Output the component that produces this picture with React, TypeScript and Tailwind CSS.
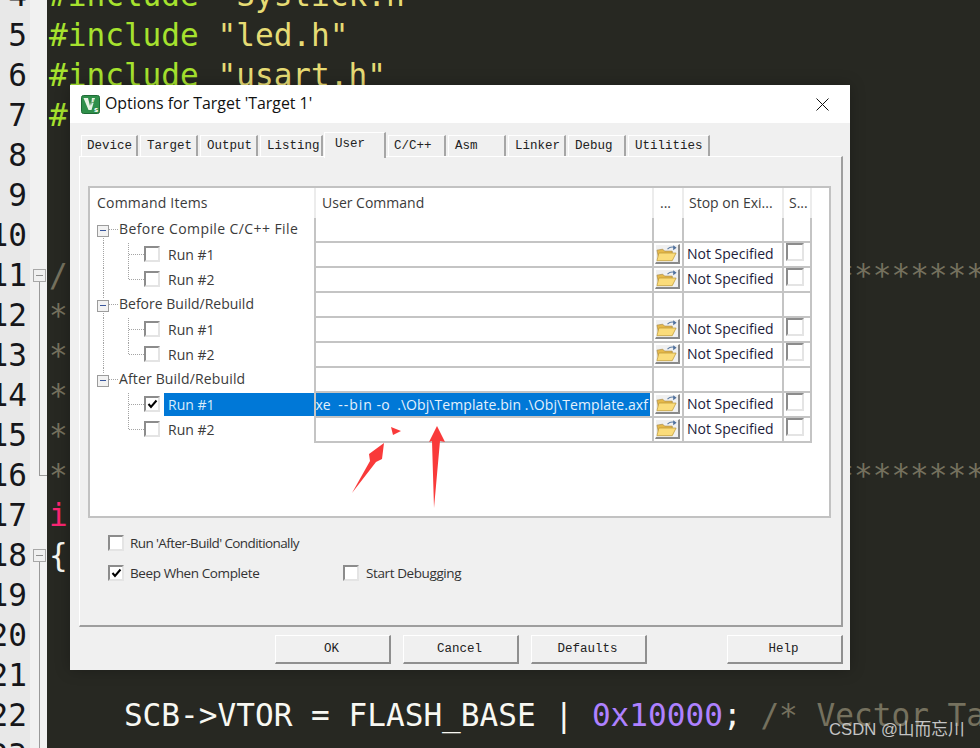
import type { ReactNode } from 'react';

const uiFont = "font-['Open_Sans','Noto_Sans',sans-serif]";
const monoFont = "font-['Liberation_Mono',monospace]";

function CodeLine({ n, fold, children }: { n: number; fold?: 'box' | 'line' | 'end'; children?: ReactNode }) {
  return (
    <div className="flex h-10 shrink-0">
      <div className="flex w-[30px] shrink-0 justify-end bg-[#e8e8e8] pr-[3px] leading-10 text-[#16161a]">{n}</div>
      <div className="relative w-[17px] shrink-0 bg-[#f1f1f1]">
        {fold === 'box' && (
          <>
            <div className="absolute left-[9px] top-[14px] h-[26px] w-px bg-[#9a9a9a]" />
            <div className="absolute left-[3px] top-[14px] flex h-[13px] w-[13px] items-center justify-center border border-[#a8a8a8] bg-[#f1f1f1]">
              <div className="h-px w-[7px] bg-[#909090]" />
            </div>
          </>
        )}
        {fold === 'line' && <div className="absolute left-[9px] top-0 h-full w-px bg-[#9a9a9a]" />}
        {fold === 'end' && (
          <div className="absolute left-[9px] top-0 h-[21px] w-2 border-b border-l border-[#9a9a9a]" />
        )}
      </div>
      <div className="ml-[2px] whitespace-pre leading-10">{children}</div>
    </div>
  );
}

function Editor() {
  const stars = '*'.repeat(60);
  const inc = 'text-[#a6e22e]';
  const str = 'text-[#e6db74]';
  const com = 'text-[#75715e]';
  return (
    <div className="-mt-[25px] flex flex-col font-['DejaVu_Sans_Mono',monospace] text-[31.1px] text-[#f8f8f2]">
      <CodeLine n={4}><span className={inc}>#include </span><span className={str}>"Systick.h"</span></CodeLine>
      <CodeLine n={5}><span className={inc}>#include </span><span className={str}>"led.h"</span></CodeLine>
      <CodeLine n={6}><span className={inc}>#include </span><span className={str}>"usart.h"</span></CodeLine>
      <CodeLine n={7}><span className={inc}>#</span></CodeLine>
      <CodeLine n={8} />
      <CodeLine n={9} />
      <CodeLine n={10} />
      <CodeLine n={11} fold="box"><span className={com}>/{stars}</span></CodeLine>
      <CodeLine n={12} fold="line"><span className={com}>*</span></CodeLine>
      <CodeLine n={13} fold="line"><span className={com}>*</span></CodeLine>
      <CodeLine n={14} fold="line"><span className={com}>*</span></CodeLine>
      <CodeLine n={15} fold="line"><span className={com}>*</span></CodeLine>
      <CodeLine n={16} fold="end"><span className={com}>{stars}</span></CodeLine>
      <CodeLine n={17}><span className="text-[#f92672]">i</span></CodeLine>
      <CodeLine n={18} fold="box">{'{'}</CodeLine>
      <CodeLine n={19} fold="line" />
      <CodeLine n={20} fold="line" />
      <CodeLine n={21} fold="line" />
      <CodeLine n={22} fold="line">
        {'    SCB->VTOR = FLASH_BASE | '}
        <span className="text-[#ae81ff]">0x10000</span>
        {'; '}
        <span className={com}>/* Vector Table</span>
      </CodeLine>
      <CodeLine n={23} fold="line" />
    </div>
  );
}

function Check({ checked, large }: { checked?: boolean; large?: boolean }) {
  return (
    <div className={`flex shrink-0 items-center justify-center border-2 border-b-[#e4e4e4] border-l-[#8c8c8c] border-r-[#e4e4e4] border-t-[#8c8c8c] bg-white ${large ? 'h-[18px] w-[18px]' : 'h-4 w-4'}`}>
      {checked && (
        <svg width="11" height="10" viewBox="0 0 11 10" fill="none">
          <path d="M1.5 5 L4 8 L9.5 1.5" stroke="#000" strokeWidth="2" />
        </svg>
      )}
    </div>
  );
}

function FolderButton() {
  return (
    <div className="ml-px mt-px flex h-[20px] w-[25px] items-center justify-center border-b-2 border-l border-r-2 border-t border-b-[#8a8a8a] border-l-white border-r-[#8a8a8a] border-t-white bg-[#f0f0f0]">
      <svg width="23" height="17" viewBox="0 0 23 17">
        <path d="M1 5 L7 4 L9 6 L17 6 L17 15 L3 15 Z" fill="#e6b94a" stroke="#a88a4a" strokeWidth="0.7" />
        <path d="M3 8 L21 8 L17 16 L1 16 Z" fill="#fbdc7a" stroke="#b8922e" strokeWidth="0.7" />
        <path d="M12 4 Q15 0.8 19 2" fill="none" stroke="#5f7fa8" strokeWidth="1.2" />
        <path d="M18 0 L21.5 2.5 L18 5 Z" fill="#4e6f9c" />
      </svg>
    </div>
  );
}

function TreeLines({ kind, first, last, lastChild }: { kind: 'group' | 'child'; first?: boolean; last?: boolean; lastChild?: boolean }) {
  const dots = { stroke: '#a4a4a4', strokeDasharray: '1 1', strokeWidth: 1 };
  return (
    <svg className="absolute inset-0" width="224" height="25">
      {kind === 'group' && !first && <line x1="13.5" y1="0" x2="13.5" y2="6" {...dots} />}
      {kind === 'group' && !last && <line x1="13.5" y1="18" x2="13.5" y2="25" {...dots} />}
      {kind === 'group' && <line x1="19" y1="11.5" x2="28" y2="11.5" {...dots} />}
      {kind === 'child' && !last && <line x1="13.5" y1="0" x2="13.5" y2="25" {...dots} />}
      {kind === 'child' && <line x1="38.5" y1="0" x2="38.5" y2={lastChild ? 12 : 25} {...dots} />}
      {kind === 'child' && <line x1="39" y1="11.5" x2="54" y2="11.5" {...dots} />}
    </svg>
  );
}

function GroupRow({ label, first, last, labelClass }: { label: string; first?: boolean; last?: boolean; labelClass?: string }) {
  return (
    <div className="flex h-[25px]">
      <div className="relative flex w-[224px] items-center">
        <TreeLines kind="group" first={first} last={last} />
        <div className="relative ml-[7px] flex h-3 w-3 items-center justify-center border border-[#9c9c9c] bg-[#f2f2f2]">
          <div className="h-px w-[6px] bg-[#39569c]" />
        </div>
        <span className={`relative ml-[10px] -mt-[4px] text-[14px] text-[#3b3b3b] ${labelClass ?? ''}`}>{label}</span>
      </div>
      <div className="w-[338px] border-b-2 border-l-2 border-[#c4c4c4]" />
      <div className="w-[30px] border-b-2 border-l-2 border-[#c4c4c4]" />
      <div className="w-[100px] border-b-2 border-l-2 border-[#c4c4c4]" />
      <div className="w-[30px] border-b-2 border-l-2 border-r-2 border-[#c4c4c4]" />
    </div>
  );
}

function RunRow({ label, last, lastChild, checked, selected }: { label: string; last?: boolean; lastChild?: boolean; checked?: boolean; selected?: boolean }) {
  return (
    <div className="flex h-[25px]">
      <div className="relative flex w-[224px] items-start">
        <TreeLines kind="child" last={last} lastChild={lastChild} />
        <div className="relative ml-[54px] mt-[3px]"><Check checked={checked} /></div>
        <div className={`relative ml-1 flex h-[23px] flex-1 items-center pl-1 text-[14px] ${selected ? 'bg-[#0078d7] text-[#d8ecfb]' : 'text-[#3b3b3b]'}`}>
          {label}
        </div>
      </div>
      <div className="flex w-[338px] border-b-2 border-l-2 border-[#c4c4c4] bg-white">
        {selected && (
          <div className="flex h-[23px] w-[334px] justify-end overflow-hidden whitespace-pre bg-[#0078d7] pr-[2px] text-[14px] leading-[23px] tracking-[0.08px] text-[#e4f1fc]">
            fromelf.exe{'  '}<span className="tracking-[1px]">--bin</span>{' -o  .\\Obj\\Template.bin .\\Obj\\Template.axf'}
          </div>
        )}
      </div>
      <div className="w-[30px] border-b-2 border-l-2 border-[#c4c4c4]"><FolderButton /></div>
      <div className="w-[100px] border-b-2 border-l-2 border-[#c4c4c4] pl-[3px] text-[14px] leading-[21px] text-[#1b1b3a]">Not Specified</div>
      <div className="w-[30px] border-b-2 border-l-2 border-r-2 border-[#c4c4c4] pl-[2px]"><Check large /></div>
    </div>
  );
}

function CommandTable() {
  return (
    <div className={`ml-[8px] mt-[29px] h-[332px] w-[743px] border-2 border-[#c2c2c2] bg-white ${uiFont}`}>
      <div className="flex h-[30px] text-[14px] text-[#3b3b3b]">
        <div className="w-[224px] pl-[7px] pt-[4px] tracking-[0.2px]">Command Items</div>
        <div className="w-[338px] border-l-2 border-[#ececec] pl-[6px] pt-[4px]">User Command</div>
        <div className="w-[30px] border-l-2 border-[#ececec] pl-[6px] pt-[4px]">...</div>
        <div className="w-[100px] border-l-2 border-[#ececec] pl-[5px] pt-[4px]">Stop on Exi...</div>
        <div className="w-[30px] border-l-2 border-r-2 border-[#ececec] pl-[5px] pt-[4px]">S...</div>
      </div>
      <GroupRow label="Before Compile C/C++ File" first labelClass="tracking-[0.4px]" />
      <RunRow label="Run #1" />
      <RunRow label="Run #2" lastChild />
      <GroupRow label="Before Build/Rebuild" />
      <RunRow label="Run #1" />
      <RunRow label="Run #2" lastChild />
      <GroupRow label="After Build/Rebuild" last labelClass="tracking-[0.15px]" />
      <RunRow label="Run #1" checked selected last />
      <RunRow label="Run #2" lastChild last />
    </div>
  );
}

const tabs = [
  { label: 'Device', w: 'w-[57px]', pl: 'pl-[5px]' },
  { label: 'Target', w: 'w-[58px]', pl: 'pl-[6px]' },
  { label: 'Output', w: 'w-[58px]', pl: 'pl-[6px]' },
  { label: 'Listing', w: 'w-[63px]', pl: 'pl-[6px]' },
  { label: 'User', w: 'w-[62px]', pl: 'pl-[10px]', active: true },
  { label: 'C/C++', w: 'w-[58px]', pl: 'pl-[5px]' },
  { label: 'Asm', w: 'w-[58px]', pl: 'pl-[6px]' },
  { label: 'Linker', w: 'w-[58px]', pl: 'pl-[6px]' },
  { label: 'Debug', w: 'w-[58px]', pl: 'pl-[6px]' },
  { label: 'Utilities', w: 'w-[82px]', pl: 'pl-[6px]' },
];

function TabBar() {
  return (
    <div className={`ml-[11px] mt-[7px] flex h-[26px] items-end gap-[2px] text-[12.5px] text-[#222] ${monoFont}`}>
      {tabs.map((tab) =>
        tab.active ? (
          <div key={tab.label} className={`relative z-10 -mb-[2px] -ml-[1px] h-[26px] border-r-2 border-l border-t border-l-white border-r-[#a6a6a6] border-t-white bg-[#f0f0f0] pt-[2px] ${tab.w} ${tab.pl}`}>
            {tab.label}
          </div>
        ) : (
          <div key={tab.label} className={`h-[21px] border-r-2 border-l border-t border-l-white border-r-[#a6a6a6] border-t-white pt-px ${tab.w} ${tab.pl}`}>
            {tab.label}
          </div>
        ),
      )}
    </div>
  );
}

function DialogButton({ label, className }: { label: string; className?: string }) {
  return (
    <div className={`flex h-[29px] w-[116px] items-center justify-center border-b-2 border-l border-r-2 border-t border-b-[#8f8f8f] border-l-white border-r-[#8f8f8f] border-t-white pr-[2px] text-[12.5px] text-[#222] ${monoFont} ${className ?? ''}`}>
      {label}
    </div>
  );
}

function UvLogo() {
  return (
    <svg width="19" height="19" viewBox="0 0 19 19">
      <rect x="0.5" y="0.5" width="18" height="18" rx="2" fill="#2f8f4a" stroke="#1f6b36" />
      <path d="M2.5 3 L7 3 L9 11 L11 3 L14 3 L10.5 15 L7.5 15 Z" fill="#e8f3e4" />
      <text x="9.5" y="8" fontSize="7" fill="#2f8f4a" fontFamily="DejaVu Sans">μ</text>
      <text x="13" y="16.5" fontSize="7" fontWeight="bold" fill="#fff" fontFamily="DejaVu Sans">s</text>
    </svg>
  );
}

function Dialog() {
  return (
    <div className="absolute left-[70px] top-[85px] h-[585px] w-[780px] bg-[#f0f0f0] shadow-[0_0_14px_rgba(0,0,0,0.25)]">
      <div className={`flex h-[38px] items-center bg-white pl-[11px] pr-[21px] ${uiFont}`}>
        <UvLogo />
        <span className="-mt-px ml-[5px] text-[15.9px] text-[#111]">Options for Target 'Target 1'</span>
        <svg className="ml-auto" width="13" height="13" viewBox="0 0 13 13">
          <path d="M0.5 0.5 L12.5 12.5 M12.5 0.5 L0.5 12.5" stroke="#111" strokeWidth="1" fill="none" />
        </svg>
      </div>
      <TabBar />
      <div className="ml-[9px] h-[471px] w-[764px] border-b-2 border-l border-r-2 border-t border-b-[#9e9e9e] border-l-white border-r-[#9e9e9e] border-t-white">
        <CommandTable />
        <div className={`ml-[28px] mt-[17px] flex flex-col gap-[14px] text-[13.5px] tracking-[-0.4px] text-[#333] ${uiFont}`}>
          <div className="flex h-4 items-center gap-[6px]">
            <Check />
            <span className="tracking-[-0.6px]">Run 'After-Build' Conditionally</span>
          </div>
          <div className="flex h-4 items-center">
            <div className="flex w-[235px] items-center gap-[6px]">
              <Check checked />
              <span>Beep When Complete</span>
            </div>
            <div className="flex items-center gap-[7px]">
              <Check />
              <span>Start Debugging</span>
            </div>
          </div>
        </div>
      </div>
      <div className="ml-[205px] mr-[7px] mt-[8px] flex gap-3">
        <DialogButton label="OK" />
        <DialogButton label="Cancel" />
        <DialogButton label="Defaults" />
        <DialogButton label="Help" className="ml-auto" />
      </div>
    </div>
  );
}

export default function App() {
  return (
    <div className="relative h-[748px] w-[980px] overflow-hidden bg-[#272822]">
      <Editor />
      <Dialog />
      {/* red annotation arrows */}
      <svg className="pointer-events-none absolute inset-0" width="980" height="748" viewBox="0 0 980 748">
        <polygon points="352,493 370,461 369,454 384,443 382,459 376,462" fill="#f93a3a" />
        <polygon points="391,427 401,431 393,435" fill="#f93a3a" />
        <polygon points="437,426 445,442 440,441 434,508 432,441 429,442" fill="#f93a3a" />
      </svg>
      <div className="absolute left-[829px] top-[717px] font-['Liberation_Sans','Noto_Sans_CJK_SC',sans-serif] text-[16.7px] text-[#c4c4c4]">
        CSDN @山而忘川
      </div>
    </div>
  );
}
